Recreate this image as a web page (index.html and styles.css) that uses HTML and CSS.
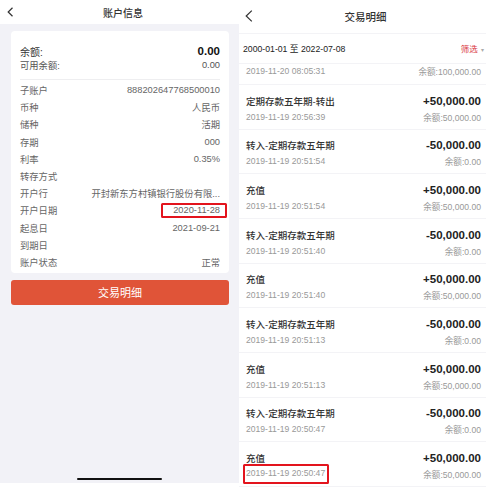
FILE: index.html
```html
<!DOCTYPE html>
<html lang="zh-CN">
<head>
    <meta charset="UTF-8" />
    <title>账户信息 / 交易明细</title>
    <link rel="stylesheet" href="styles.css">
</head>
<body>
  <div class="screens">

    <!-- 账户信息 -->
    <section class="panel account">
      <div class="topbar">
        <svg class="back" width="7" height="10" viewBox="0 0 7 10"><polyline points="5.5,0.8 1.2,5 5.5,9.2" fill="none" stroke="#333" stroke-width="1.2"/></svg>
        <h1>账户信息</h1>
        <span></span>
      </div>

      <div class="card">
        <div class="balance">
          <div class="bal-row main"><span>余额:</span><b>0.00</b></div>
          <div class="bal-row"><span>可用余额:</span><span>0.00</span></div>
        </div>
        <div class="info">
          <div class="info-row"><span>子账户</span><span>888202647768500010</span></div>
          <div class="info-row"><span>币种</span><span>人民币</span></div>
          <div class="info-row"><span>储种</span><span>活期</span></div>
          <div class="info-row"><span>存期</span><span>000</span></div>
          <div class="info-row"><span>利率</span><span>0.35%</span></div>
          <div class="info-row"><span>转存方式</span><span></span></div>
          <div class="info-row"><span>开户行</span><span>开封新东方村镇银行股份有限...</span></div>
          <div class="info-row"><span>开户日期</span><span class="mark mark-open">2020-11-28</span></div>
          <div class="info-row"><span>起息日</span><span>2021-09-21</span></div>
          <div class="info-row"><span>到期日</span><span></span></div>
          <div class="info-row"><span>账户状态</span><span>正常</span></div>
        </div>
      </div>

      <button class="detail-btn">交易明细</button>

      <div class="home-bar"></div>
    </section>

    <!-- 交易明细 -->
    <section class="panel trades">
      <div class="topbar tall">
        <svg class="back" width="8" height="12" viewBox="0 0 8 12"><polyline points="6.8,0.6 1.2,6 6.8,11.4" fill="none" stroke="#333" stroke-width="1.2"/></svg>
        <h1>交易明细</h1>
        <span></span>
      </div>

      <div class="filter">
        <span class="range">2000-01-01 至 2022-07-08</span>
        <span class="filter-btn">筛选 <i>▾</i></span>
      </div>

      <div class="trade partial">
        <div class="trade-row sub"><span>2019-11-20 08:05:31</span><span>余额:100,000.00</span></div>
      </div>
      <div class="trade">
        <div class="trade-row"><span class="name">定期存款五年期-转出</span><b>+50,000.00</b></div>
        <div class="trade-row sub"><span>2019-11-19 20:56:39</span><span>余额:50,000.00</span></div>
      </div>
      <div class="trade">
        <div class="trade-row"><span class="name">转入-定期存款五年期</span><b>-50,000.00</b></div>
        <div class="trade-row sub"><span>2019-11-19 20:51:54</span><span>余额:0.00</span></div>
      </div>
      <div class="trade">
        <div class="trade-row"><span class="name">充值</span><b>+50,000.00</b></div>
        <div class="trade-row sub"><span>2019-11-19 20:51:54</span><span>余额:50,000.00</span></div>
      </div>
      <div class="trade">
        <div class="trade-row"><span class="name">转入-定期存款五年期</span><b>-50,000.00</b></div>
        <div class="trade-row sub"><span>2019-11-19 20:51:40</span><span>余额:0.00</span></div>
      </div>
      <div class="trade">
        <div class="trade-row"><span class="name">充值</span><b>+50,000.00</b></div>
        <div class="trade-row sub"><span>2019-11-19 20:51:40</span><span>余额:50,000.00</span></div>
      </div>
      <div class="trade">
        <div class="trade-row"><span class="name">转入-定期存款五年期</span><b>-50,000.00</b></div>
        <div class="trade-row sub"><span>2019-11-19 20:51:13</span><span>余额:0.00</span></div>
      </div>
      <div class="trade">
        <div class="trade-row"><span class="name">充值</span><b>+50,000.00</b></div>
        <div class="trade-row sub"><span>2019-11-19 20:51:13</span><span>余额:50,000.00</span></div>
      </div>
      <div class="trade">
        <div class="trade-row"><span class="name">转入-定期存款五年期</span><b>-50,000.00</b></div>
        <div class="trade-row sub"><span>2019-11-19 20:50:47</span><span>余额:0.00</span></div>
      </div>
      <div class="trade">
        <div class="trade-row"><span class="name">充值</span><b>+50,000.00</b></div>
        <div class="trade-row sub"><span class="mark mark-date">2019-11-19 20:50:47</span><span>余额:50,000.00</span></div>
      </div>
    </section>

  </div>
</body>
</html>
```

FILE: styles.css
```css
* {
    margin: 0;
    padding: 0;
    box-sizing: border-box;
    font-family: "Liberation Sans", "Noto Sans CJK SC", sans-serif;
}

body {
    background-color: #fff;
    width: 486px;
    height: 487px;
    overflow: hidden;
}

.screens {
    display: flex;
    align-items: flex-start;
}

.panel {
    display: flex;
    flex-direction: column;
    overflow: hidden;
}

/* shared top bar */
.topbar {
    display: grid;
    grid-template-columns: 1fr auto 1fr;
    align-items: center;
    height: 24px;
    padding-left: 7px;
    background-color: #fff;
}

.topbar h1 {
    font-size: 10px;
    font-weight: 500;
    color: #333;
}

.topbar .back {
    display: block;
}

.topbar.tall {
    height: 33px;
    padding-left: 6px;
}

.topbar.tall h1 {
    font-size: 10.5px;
}

/* left screen */
.account {
    width: 239px;
    height: 483px;
    background-color: #f2f2f7;
}

.card {
    margin: 7px 10px 0 11px;
    padding: 13px 9px 2.3px;
    background-color: #fff;
    border-radius: 4px;
}

.balance {
    padding-bottom: 8px;
    border-bottom: 1px solid #eeeef0;
}

.bal-row {
    display: flex;
    justify-content: space-between;
    align-items: center;
    height: 13px;
    font-size: 9.3px;
    color: #555;
}

.bal-row.main {
    height: 14px;
    font-size: 10px;
    color: #333;
}

.bal-row.main b {
    font-size: 11.5px;
    color: #111;
}

.info {
    padding-top: 1.5px;
}

.info-row {
    display: flex;
    justify-content: space-between;
    align-items: center;
    height: 17.2px;
    font-size: 9.3px;
    color: #666;
}

.detail-btn {
    margin: 7px 10px 0 11px;
    height: 25px;
    border: none;
    border-radius: 3px;
    background-color: #e05438;
    color: #fff;
    font-size: 11px;
}

.home-bar {
    align-self: center;
    width: 85px;
    height: 2.5px;
    margin-top: auto;
    margin-bottom: 3px;
    border-radius: 2px;
    background-color: #111;
}

/* right screen */
.trades {
    width: 247px;
    height: 487px;
    background-color: #fff;
}

.filter {
    display: flex;
    justify-content: space-between;
    align-items: center;
    height: 31px;
    padding: 0 2px 0 4px;
    border-top: 1.5px solid #f3f3f6;
    border-bottom: 1.5px solid #f3f3f6;
}

.range {
    font-size: 8.7px;
    color: #222;
}

.filter-btn {
    font-size: 8.5px;
    color: #d9353c;
}

.filter-btn i {
    font-style: normal;
    font-size: 6px;
    color: #aaa;
    margin-left: 1px;
}

.trade {
    height: 44.8px;
    padding: 7.5px 5px 0 7px;
    border-bottom: 1.5px solid #f3f3f6;
}

.trade.partial {
    height: 21.5px;
    padding-top: 0;
}

.trade-row {
    display: flex;
    justify-content: space-between;
    align-items: center;
    height: 16px;
}

.trade.partial .trade-row {
    height: 14px;
}

.trade-row .name {
    font-size: 9.5px;
    font-weight: 500;
    color: #333;
}

.trade-row b {
    font-size: 11.5px;
    color: #222;
}

.trade-row.sub {
    font-size: 8.6px;
    color: #999;
}

/* red annotation boxes */
.mark {
    position: relative;
    display: inline-block;
    line-height: 11px;
}

.mark::after {
    content: "";
    position: absolute;
    border: 2px solid #e3141d;
    border-radius: 1.5px;
}

.mark-open::after {
    top: -2px;
    bottom: -2px;
    left: -12px;
    right: -7px;
}

.mark-date::after {
    top: -4px;
    bottom: -5px;
    left: -3px;
    right: -4px;
}
```
